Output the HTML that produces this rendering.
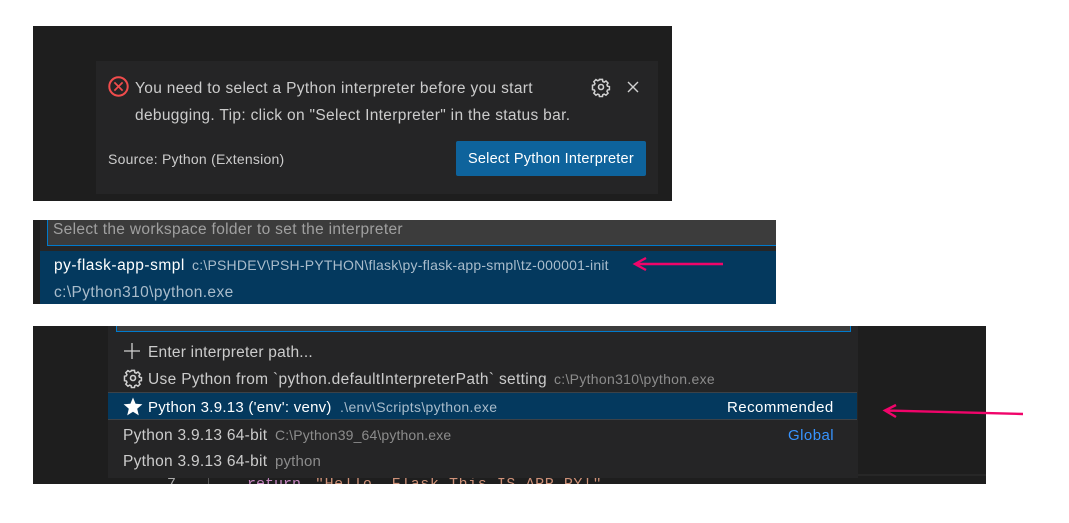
<!DOCTYPE html>
<html><head><meta charset="utf-8">
<style>
html,body{margin:0;padding:0;background:#fff;}
body{width:1069px;height:523px;position:relative;overflow:hidden;font-family:"Liberation Sans","Noto Sans CJK JP",sans-serif;font-size:14px;}
.b{position:absolute;}
.t{position:absolute;white-space:nowrap;line-height:20px;height:20px;font-size:15.5px;}
svg{position:absolute;overflow:visible;}
</style></head><body>

<div class="b" style="left:33px;top:26px;width:639px;height:175px;background:#1e1e1e"></div>
<div class="b" style="left:96px;top:61px;width:562px;height:133px;background:#252526"></div>
<svg style="left:108px;top:76px" width="21" height="21" viewBox="0 0 21 21"><circle cx="10.500" cy="10.500" r="9.200" fill="none" stroke="#f14c4c" stroke-width="2"/><path d="M6.400 6.400L14.600 14.600M14.600 6.400L6.400 14.600" stroke="#f14c4c" stroke-width="1.700" fill="none"/></svg>
<div class="t" style="left:135px;top:79px;color:#ccc;letter-spacing:.33px">You need to select a Python interpreter before you start</div>
<div class="t" style="left:135px;top:106px;color:#ccc;letter-spacing:.33px">debugging. Tip: click on "Select Interpreter" in the status bar.</div>
<div class="t" style="left:108px;top:149px;color:#ccc;font-size:14px;letter-spacing:.23px">Source: Python (Extension)</div>
<svg style="left:592px;top:78px" width="18" height="18" viewBox="0 0 18 18"><path d="M7.400 1.200h3.200l.4 2.200 1.400.6 1.900-1.200 2.200 2.200-1.200 1.900.6 1.400 2 .4v3.200l-2 .4-.6 1.400 1.200 1.900-2.200 2.200-1.900-1.200-1.400.6-.4 2H7.400l-.4-2-1.400-.6-1.900 1.200-2.200-2.200 1.200-1.900-.6-1.400-2-.4V7.300l2-.4.6-1.400L1.500 3.600 3.700 1.400 5.600 2.600 7 2z" transform="translate(.4 .3) scale(.95)" fill="none" stroke="#d0d0d0" stroke-width="1.600"/><circle cx="9" cy="9" r="2.500" fill="none" stroke="#d0d0d0" stroke-width="1.600"/></svg>
<svg style="left:627px;top:81px" width="12" height="12" viewBox="0 0 12 12"><path d="M1 1L11 11M11 1L1 11" stroke="#d0d0d0" stroke-width="1.400" fill="none"/></svg>
<div class="b" style="left:456px;top:141px;width:190px;height:35px;background:#0e639c;border-radius:2px"></div>
<div class="t" style="left:468px;top:149px;color:#fff;font-size:14.500px;letter-spacing:.22px">Select Python Interpreter</div>

<div class="b" style="left:33px;top:220px;width:743px;height:84px;background:#252526"></div>
<div class="b" style="left:33px;top:220px;width:7px;height:84px;background:#1e1e1e"></div>
<div class="b" style="left:47px;top:220px;width:728px;height:25px;background:#3c3c3c;border-left:1px solid #007acc;border-bottom:1px solid #007acc"></div>
<div class="t" style="left:53px;top:220px;color:#a0a0a0;letter-spacing:.33px">Select the workspace folder to set the interpreter</div>
<div class="b" style="left:40px;top:251px;width:736px;height:53px;background:#04395e"></div>
<div class="t" style="left:54px;top:256px;color:#fff;letter-spacing:.5px">py-flask-app-smpl</div>
<div class="t" style="left:192px;top:255px;color:#a9bccb;font-size:14px;letter-spacing:.22px">c:\PSHDEV\PSH-PYTHON\flask\py-flask-app-smpl\tz-000001-init</div>
<div class="t" style="left:54px;top:283px;color:#a9bccb;font-size:15.500px;letter-spacing:.39px">c:\Python310\python.exe</div>
<svg style="left:0;top:0" width="1069" height="523"><path d="M723 264L636 264M646 258L635 264L646 270" fill="none" stroke="#f0046a" stroke-width="2.400"/></svg>

<div class="b" style="left:33px;top:326px;width:953px;height:158px;background:#1e1e1e"></div>
<div class="b" style="left:858px;top:474px;width:128px;height:2px;background:#272727"></div>
<div class="b" style="left:108px;top:326px;width:750px;height:152px;background:#252526"></div>
<div class="b" style="left:116px;top:326px;width:733px;height:5px;background:#3c3c3c;border:1px solid #007acc;border-top:0"></div>
<svg style="left:124px;top:343px" width="16" height="16" viewBox="0 0 16 16"><path d="M8 0V16M0 8H16" stroke="#d0d0d0" stroke-width="1.300" fill="none"/></svg>
<div class="t" style="left:148px;top:343px;color:#ccc;letter-spacing:.22px">Enter interpreter path...</div>
<svg style="left:124px;top:369px" width="18" height="18" viewBox="0 0 18 18"><path d="M7.400 1.200h3.200l.4 2.200 1.400.6 1.900-1.200 2.200 2.200-1.200 1.900.6 1.400 2 .4v3.200l-2 .4-.6 1.400 1.200 1.900-2.200 2.200-1.900-1.200-1.400.6-.4 2H7.400l-.4-2-1.400-.6-1.900 1.200-2.200-2.200 1.200-1.900-.6-1.400-2-.4V7.300l2-.4.6-1.400L1.500 3.600 3.700 1.400 5.600 2.600 7 2z" transform="translate(.4 .3) scale(.95)" fill="none" stroke="#d0d0d0" stroke-width="1.600"/><circle cx="9" cy="9" r="2.500" fill="none" stroke="#d0d0d0" stroke-width="1.600"/></svg>
<div class="t" style="left:148px;top:370px;color:#ccc;letter-spacing:.33px">Use Python from `python.defaultInterpreterPath` setting</div>
<div class="t" style="left:554px;top:369px;color:#8c8c8c;font-size:14px;letter-spacing:.3px">c:\Python310\python.exe</div>
<div class="b" style="left:108px;top:392px;width:749px;height:26px;background:#04395e;border-top:1px solid #3c4248;border-bottom:1px solid #3c4248"></div>
<svg style="left:123px;top:397px" width="20" height="19" viewBox="0 0 20 19"><path d="M10 0.500L12.600 6.800 19.400 7.300 14.200 11.700 15.800 18.400 10 14.800 4.200 18.400 5.800 11.700.6 7.300 7.400 6.800z" fill="#fff"/></svg>
<div class="t" style="left:148px;top:398px;color:#fff;font-size:15px;letter-spacing:.26px">Python 3.9.13 ('env': venv)</div>
<div class="t" style="left:340px;top:397px;color:#a9bccb;font-size:14px;letter-spacing:.33px">.\env\Scripts\python.exe</div>
<div class="t" style="left:727px;top:398px;color:#fff;font-size:15px;letter-spacing:.45px">Recommended</div>
<div class="t" style="left:123px;top:426px;color:#ccc;letter-spacing:.28px">Python 3.9.13 64-bit</div>
<div class="t" style="left:275px;top:425px;color:#8c8c8c;font-size:14px;letter-spacing:.14px">C:\Python39_64\python.exe</div>
<div class="t" style="left:788px;top:426px;color:#3794ff;font-size:15px;letter-spacing:.45px">Global</div>
<div class="t" style="left:123px;top:452px;color:#ccc;letter-spacing:.28px">Python 3.9.13 64-bit</div>
<div class="t" style="left:275px;top:452px;color:#8c8c8c;font-size:15px;letter-spacing:.17px">python</div>
<div class="b" style="left:33px;top:478px;width:953px;height:6px;background:#1e1e1e;overflow:hidden">
  <div class="b" style="left:175px;top:0;width:1px;height:6px;background:#5a5a5a"></div>
  <div class="t" style="left:134px;top:-3px;color:#aaa;font-family:'Liberation Mono',monospace;font-size:15px">7</div>
  <div class="t" style="left:214px;top:-3px;color:#c586c0;font-family:'Liberation Mono',monospace;font-size:15px">return</div>
  <div class="t" style="left:282px;top:-3px;color:#ce9178;font-family:'Liberation Mono',monospace;font-size:15px;letter-spacing:.57px">"Hello, Flask This IS APP.PY!"</div>
</div>
<svg style="left:0;top:0" width="1069" height="523"><path d="M1023 414L886 410.500M896 405L885 410.500L896 417" fill="none" stroke="#f0046a" stroke-width="2.400"/></svg>
</body></html>
